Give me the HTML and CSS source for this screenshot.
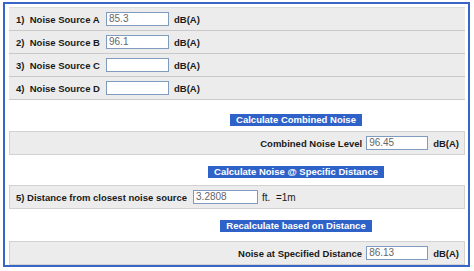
FILE: index.html
```html
<!DOCTYPE html>
<html>
<head>
<meta charset="utf-8">
<link rel="stylesheet" href="styles.css">
</head>
<body>
<div class="frame">
  <div class="sources">
    <div class="src"><span class="lbl">1)&nbsp; Noise Source A</span><span class="inp">85.3</span><span class="unit">dB(A)</span></div>
    <div class="src"><span class="lbl">2)&nbsp; Noise Source B</span><span class="inp">96.1</span><span class="unit">dB(A)</span></div>
    <div class="src"><span class="lbl">3)&nbsp; Noise Source C</span><span class="inp"></span><span class="unit">dB(A)</span></div>
    <div class="src"><span class="lbl">4)&nbsp; Noise Source D</span><span class="inp"></span><span class="unit">dB(A)</span></div>
  </div>
  <div class="btnrow b1"><span class="btn">Calculate Combined Noise</span></div>
  <div class="panel result"><span class="lbl">Combined Noise Level</span><span class="inp">96.45</span><span class="unit">dB(A)</span></div>
  <div class="btnrow b2"><span class="btn">Calculate Noise @ Specific Distance</span></div>
  <div class="panel dist"><span class="lbl">5) Distance from closest noise source</span><span class="inp wide">3.2808</span><span class="unit plain">ft.&nbsp; =1m</span></div>
  <div class="btnrow b3"><span class="btn">Recalculate based on Distance</span></div>
  <div class="panel result last"><span class="lbl">Noise at Specified Distance</span><span class="inp">86.13</span><span class="unit">dB(A)</span></div>
</div>
</body>
</html>
```
FILE: styles.css
```css
* { box-sizing: border-box; }
html, body { margin: 0; padding: 0; background: #fff; }
body {
  font-family: "Liberation Sans", Arial, sans-serif;
  font-size: 9.5px;
  color: #1a1a1a;
}
.frame {
  margin: 2px 3px 0 3px;
  width: 467px;
  height: 265px;
  border: 2px solid #3866c6;
  padding: 3px 3px 0 4px;
  display: flex;
  flex-direction: column;
}
.sources {
  display: flex;
  flex-direction: column;
  border-top: 1px solid #dedede;
}
.src {
  height: 23px;
  background: #ececec;
  border-bottom: 1px solid #c9c9c9;
  display: flex;
  align-items: center;
  padding-left: 7px;
}
.lbl { font-weight: bold; white-space: nowrap; }
.src .lbl { width: 90px; flex-shrink: 0; }
.inp {
  display: block;
  flex-shrink: 0;
  height: 14px;
  width: 63px;
  border: 1px solid #7f9cc0;
  background: #fff;
  color: #666;
  font-size: 10px;
  line-height: 12px;
  padding-left: 2px;
}
.unit { font-weight: bold; margin-left: 5px; white-space: nowrap; }
.unit.plain { font-weight: normal; margin-left: 4px; font-size: 10px; }
.btnrow {
  display: flex;
  justify-content: center;
  padding-left: 118px;
}
.btn {
  background: #2f62c9;
  color: #fff;
  font-weight: bold;
  height: 12px;
  line-height: 12px;
  padding: 0 6px;
  white-space: nowrap;
}
.b1 { margin-top: 14px; }
.b2 { margin-top: 11px; }
.b3 { margin-top: 11px; }
.panel {
  height: 24px;
  background: #ececec;
  border: 1px solid #d2d2d2;
  display: flex;
  align-items: center;
}
.result { justify-content: flex-end; padding-right: 5px; margin-top: 5px; }
.result .inp { margin-left: 4px; width: 62px; }
.dist { margin-top: 7px; padding-left: 6px; }
.dist .inp { margin-left: 6px; width: 65px; }
.last { margin-top: 9px; }
```
